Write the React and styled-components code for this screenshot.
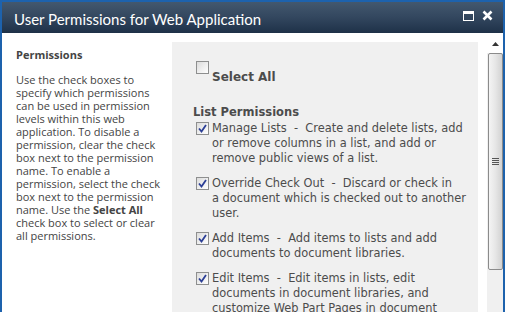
import React from "react";
import styled, { createGlobalStyle } from "styled-components";

const GlobalStyle = createGlobalStyle`
  html, body {
    margin: 0;
    padding: 0;
    background: #ffffff;
    overflow: hidden;
  }
`;

const permissions = [
  {
    name: "Manage Lists",
    text: "Create and delete lists, add or remove columns in a list, and add or remove public views of a list.",
  },
  {
    name: "Override Check Out",
    text: "Discard or check in a\u00a0document which is checked out to another user.",
  },
  {
    name: "Add Items",
    text: "Add items to lists and add documents to document libraries.",
  },
  {
    name: "Edit Items",
    text: "Edit items in lists, edit documents in document libraries, and customize Web Part Pages in document libraries.",
  },
];

const CheckBox = ({ checked }) => (
  <Box>
    {checked && (
      <svg width="9" height="9" viewBox="0 0 9 9">
        <path
          d="M1 4.5 L3.5 7.5 L8 1"
          fill="none"
          stroke="#2c3f96"
          strokeWidth="1.8"
        />
      </svg>
    )}
  </Box>
);

const App = () => {
  return (
    <Window>
      <GlobalStyle />
      <TitleBar>
        <Title>User Permissions for Web Application</Title>
        <Controls>
          <MaxIcon />
          <svg width="11" height="11" viewBox="0 0 11 11">
            <path
              d="M1.5 1.5 L9.5 9.5 M9.5 1.5 L1.5 9.5"
              stroke="#ffffff"
              strokeWidth="2.6"
            />
          </svg>
        </Controls>
      </TitleBar>
      <Body>
        <Content>
          <Divider />
          <Columns>
            <Side>
              <SideTitle>Permissions</SideTitle>
              <SideText>
                Use the check boxes to specify which permissions can be used in
                permission levels within this web application. To disable a
                permission, clear the check box next to the permission name. To
                enable a permission, select the check box next to the
                permission name. Use the <b>Select All</b> check box to select
                or clear all permissions.
              </SideText>
            </Side>
            <Panel>
              <SelectAll>
                <CheckBox />
                <SelectLabel>Select All</SelectLabel>
              </SelectAll>
              <GroupTitle>List Permissions</GroupTitle>
              {permissions.map((p) => (
                <Item key={p.name}>
                  <CheckBox checked />
                  <ItemText>
                    {p.name}&nbsp; -&nbsp; {p.text}
                  </ItemText>
                </Item>
              ))}
            </Panel>
          </Columns>
        </Content>
        <Scrollbar>
          <ArrowUp>
            <svg width="7" height="4" viewBox="0 0 7 4">
              <path d="M0 4 L3.5 0 L7 4 Z" fill="#333" />
            </svg>
          </ArrowUp>
          <Thumb>
            <Grip />
          </Thumb>
        </Scrollbar>
      </Body>
    </Window>
  );
};

export default App;

const Window = styled.div`
  width: 505px;
  height: 312px;
  box-sizing: border-box;
  border: 2px solid #1d62ad;
  border-bottom: none;
  display: flex;
  flex-direction: column;
  overflow: hidden;
  background: #ffffff;
`;

const TitleBar = styled.div`
  height: 32px;
  flex-shrink: 0;
  margin: -2px -2px 0;
  padding: 0 12px 0 12px;
  border-top: 1px solid #2a77c6;
  border-left: 2px solid #1d62ad;
  border-right: 2px solid #1d62ad;
  background: linear-gradient(#44596f, #33475f 50%, #1e3148);
  display: flex;
  align-items: center;
  justify-content: space-between;
`;

const Title = styled.div`
  color: #ffffff;
  font-family: "Lato", "Liberation Sans", sans-serif;
  font-size: 15px;
  margin-top: 3px;
`;

const Controls = styled.div`
  display: flex;
  align-items: center;
  gap: 8px;
  margin-top: -3px;
  margin-right: -2px;
`;

const MaxIcon = styled.div`
  width: 11px;
  height: 10px;
  box-sizing: border-box;
  border: 1.5px solid #ffffff;
  border-top-width: 3px;
`;

const Body = styled.div`
  flex: 1;
  display: flex;
  min-height: 0;
`;

const Content = styled.div`
  flex: 1;
  padding: 9px 0 0 8px;
  display: flex;
  flex-direction: column;
  min-width: 0;
`;

const Divider = styled.div`
  height: 1px;
  background: #d8d8d8;
`;

const Columns = styled.div`
  flex: 1;
  display: flex;
`;

const Side = styled.div`
  width: 162px;
  flex-shrink: 0;
  box-sizing: border-box;
  padding: 6px 10px 0 6px;
  color: #444444;
  font-family: "Open Sans", "Liberation Sans", sans-serif;
`;

const SideTitle = styled.div`
  font-weight: bold;
  font-size: 11px;
  line-height: 13px;
  margin-bottom: 12px;
`;

const SideText = styled.div`
  font-size: 11px;
  line-height: 13px;
`;

const Panel = styled.div`
  flex: 1;
  background: #f0f0f0;
  padding: 19px 0 0 21px;
  color: #4c4c4c;
  font-family: "DejaVu Sans", Verdana, sans-serif;
  font-size: 11.4px;
`;

const Box = styled.div`
  width: 13px;
  height: 13px;
  box-sizing: border-box;
  flex-shrink: 0;
  border: 1px solid #8e8f8f;
  background: linear-gradient(135deg, #dcdcdc, #ffffff);
  display: flex;
  align-items: center;
  justify-content: center;
`;

const SelectAll = styled.div`
  display: flex;
  align-items: flex-start;
  margin-left: 3px;
  margin-bottom: 21px;
`;

const SelectLabel = styled.div`
  font-weight: bold;
  font-size: 12px;
  margin: 9px 0 0 3px;
`;

const GroupTitle = styled.div`
  font-weight: bold;
  font-size: 11.5px;
  line-height: 14px;
  margin-bottom: 3px;
`;

const Item = styled.div`
  display: flex;
  align-items: flex-start;
  margin-left: 3px;
  margin-bottom: 11px;
`;

const ItemText = styled.div`
  width: 256px;
  margin-left: 3px;
  line-height: 15px;
  margin-top: -1px;
`;

const Scrollbar = styled.div`
  width: 16px;
  margin-left: 9px;
  background: #f0f0f0;
  display: flex;
  flex-direction: column;
  align-items: center;
`;

const ArrowUp = styled.div`
  height: 20px;
  width: 100%;
  background: #ffffff;
  display: flex;
  align-items: center;
  justify-content: center;
  padding-top: 2px;
  box-sizing: border-box;
`;

const Thumb = styled.div`
  width: 15px;
  height: 217px;
  box-sizing: border-box;
  border: 1px solid #8b8b8b;
  border-radius: 2px;
  background: linear-gradient(90deg, #f4f4f4, #e6e6e6 50%, #d2d2d2);
  display: flex;
  align-items: center;
  justify-content: center;
`;

const Grip = styled.div`
  width: 7px;
  height: 7px;
  background: repeating-linear-gradient(
    #555555 0,
    #555555 1px,
    transparent 1px,
    transparent 2px
  );
`;
